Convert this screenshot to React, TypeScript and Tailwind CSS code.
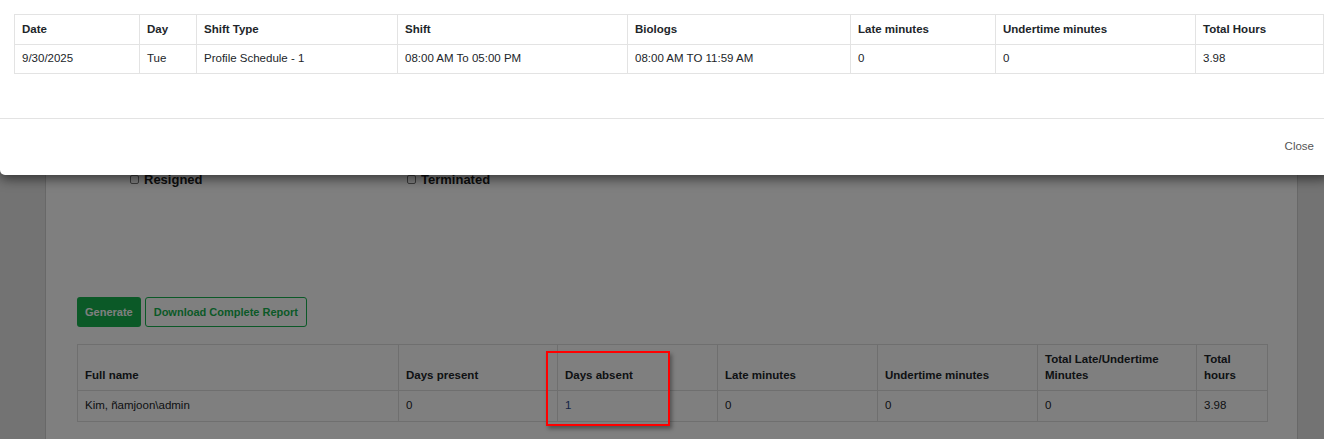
import React from "react";

const shiftCols = [
  { label: "Date", w: "w-[125px]" },
  { label: "Day", w: "w-[57px]" },
  { label: "Shift Type", w: "w-[201px]" },
  { label: "Shift", w: "w-[230px]" },
  { label: "Biologs", w: "w-[223px]" },
  { label: "Late minutes", w: "w-[145px]" },
  { label: "Undertime minutes", w: "w-[200px]" },
  { label: "Total Hours", w: "w-[128px]" },
];

const shiftRow = ["9/30/2025", "Tue", "Profile Schedule - 1", "08:00 AM To 05:00 PM", "08:00 AM TO 11:59 AM", "0", "0", "3.98"];

const summaryCols = [
  { label: "Full name", w: "w-[321px]" },
  { label: "Days present", w: "w-[159px]" },
  { label: "Days absent", w: "w-[160px]" },
  { label: "Late minutes", w: "w-[160px]" },
  { label: "Undertime minutes", w: "w-[160px]" },
  { label: "Total Late/Undertime Minutes", w: "w-[159px]" },
  { label: "Total hours", w: "w-[71px]" },
];

const summaryRow = ["Kim, ñamjoon\\admin", "0", "1", "0", "0", "0", "3.98"];

function Checkbox({ label }: { label: string }) {
  return (
    <label className="flex items-center gap-[5px] text-[13px] font-bold text-[#1b1b1b]">
      <span className="w-[9px] h-[9px] rounded-[2px] border border-[#767676] bg-white" />
      {label}
    </label>
  );
}

export default function App() {
  return (
    <div className="relative w-full h-[439px] overflow-hidden bg-[#e6e6e6] font-['Liberation_Sans',Arial,sans-serif]">
      {/* Page behind the modal */}
      <div className="ml-[45px] w-[1253px] h-full bg-white border-x border-[#d0d0d0]">
        <div className="h-[170px]" />
        <div className="flex items-start pl-[84px] h-[16px]">
          <div className="w-[277px]">
            <Checkbox label="Resigned" />
          </div>
          <Checkbox label="Terminated" />
        </div>

        <div className="mt-[111px] pl-[31px] flex gap-[4px]">
          <button className="h-[30px] px-[8px] rounded-[3px] bg-[#16b34f] text-white text-[11px] font-bold">Generate</button>
          <button className="h-[30px] px-[8px] rounded-[3px] border border-[#16b34f] text-[#16b34f] text-[11px] font-bold">
            Download Complete Report
          </button>
        </div>

        <table className="mt-[17px] ml-[31px] w-[1190px] table-fixed border-collapse text-[11.5px] text-[#212529]">
          <thead>
            <tr className="h-[46px]">
              {summaryCols.map((c) => (
                <th key={c.label} className={`${c.w} border border-[#dedede] px-[7px] pb-[7px] align-bottom text-left font-bold leading-[16px]`}>
                  {c.label}
                </th>
              ))}
            </tr>
          </thead>
          <tbody>
            <tr className="h-[31px]">
              {summaryRow.map((v, i) => (
                <td key={i} className={`border border-[#dedede] px-[7px] ${i === 2 ? "text-[#2a4a8c]" : ""}`}>
                  {v}
                </td>
              ))}
            </tr>
          </tbody>
        </table>
      </div>

      {/* Backdrop */}
      <div className="absolute inset-0 bg-black/50" />

      {/* Modal */}
      <div className="absolute top-0 left-0 w-[1330px] bg-white rounded-b-[5px] shadow-[0_4px_12px_rgba(0,0,0,0.55)]">
        <div className="pt-[14px] pb-[44px] pl-[14px]">
          <table className="w-[1310px] table-fixed border-collapse text-[11.5px] text-[#212529]">
            <thead>
              <tr className="h-[30px]">
                {shiftCols.map((c) => (
                  <th key={c.label} className={`${c.w} border border-[#e3e3e3] px-[7px] text-left font-bold`}>
                    {c.label}
                  </th>
                ))}
              </tr>
            </thead>
            <tbody>
              <tr className="h-[29px]">
                {shiftRow.map((v, i) => (
                  <td key={i} className="border border-[#e3e3e3] px-[7px]">
                    {v}
                  </td>
                ))}
              </tr>
            </tbody>
          </table>
        </div>
        <div className="h-[57px] border-t border-[#e3e3e3] flex items-center justify-end pr-[16px]">
          <button className="text-[11.5px] text-[#555]">Close</button>
        </div>
      </div>

      {/* Highlight annotation */}
      <div className="absolute left-[546px] top-[351px] w-[124px] h-[75px] border-2 border-[#ff0000] shadow-[2px_3px_4px_rgba(0,0,0,0.35)]" />
    </div>
  );
}
